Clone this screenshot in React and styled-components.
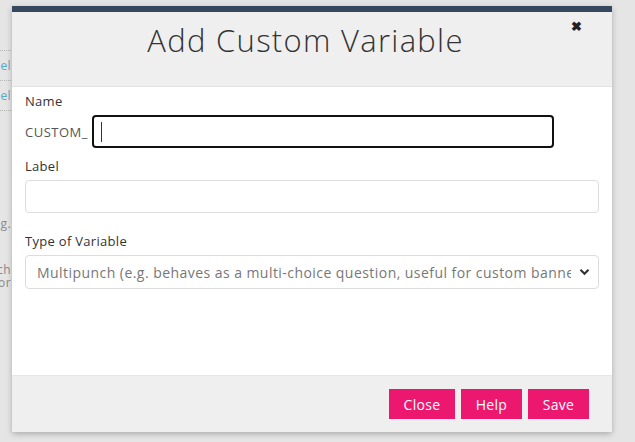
import React from "react";
import styled, { createGlobalStyle } from "styled-components";

const GlobalStyle = createGlobalStyle`
  html, body {
    margin: 0;
    padding: 0;
    background: #e5e5e5;
  }
  body {
    font-family: "Open Sans", "Liberation Sans", sans-serif;
    color: #333;
  }
  * {
    box-sizing: border-box;
  }
`;

const Screen = styled.div`
  position: relative;
  width: 635px;
  height: 442px;
  overflow: hidden;
  background: #e5e5e5;
`;

// page content peeking out behind the dialog
const BackPage = styled.div`
  width: 11px;
  padding-top: 42px;
  display: flex;
  flex-direction: column;
`;

const BackRow = styled.div`
  height: ${({ $h }) => $h}px;
  display: flex;
  justify-content: flex-end;
  align-items: center;
  overflow: hidden;
  white-space: nowrap;
  font-size: 12px;
  line-height: 12px;
  letter-spacing: 0.4px;
  color: ${({ $link }) => ($link ? "#5aa7c7" : "#8a8a8a")};
  border-bottom: ${({ $dotted }) => ($dotted ? "1px dotted #b5b5b5" : "none")};
`;

const Modal = styled.div`
  position: absolute;
  left: 12px;
  top: 6px;
  width: 600px;
  height: 426px;
  display: flex;
  flex-direction: column;
  background: #fff;
  border-top: 6px solid #34495e;
  box-shadow: 0 2px 6px rgba(0, 0, 0, 0.25);
`;

const Header = styled.div`
  height: 75px;
  display: flex;
  align-items: flex-start;
  background: #efefef;
  border-bottom: 1px solid #e2e2e2;
  padding: 0 30px 0 28px;
`;

const Title = styled.h2`
  flex: 1;
  margin: 0;
  padding-top: 7px;
  text-align: center;
  font-size: 31px;
  font-weight: 300;
  letter-spacing: 1.3px;
  color: #333;
`;

const CloseX = styled.span`
  margin-top: 5px;
  font-size: 13px;
  font-weight: 700;
  color: #222;
  cursor: pointer;
`;

const Body = styled.div`
  flex: 1;
  padding: 5px 13px 0 13px;
  letter-spacing: 0.5px;
`;

const Group = styled.div`
  margin-bottom: ${({ $mb }) => $mb}px;
`;

const FieldLabel = styled.label`
  display: block;
  font-size: 13px;
  line-height: 18px;
  font-weight: 500;
  letter-spacing: 0.3px;
  color: #333;
  margin-bottom: ${({ $mb }) => $mb ?? 5}px;
`;

const NameRow = styled.div`
  display: flex;
  align-items: center;
`;

const Prefix = styled.span`
  width: 67px;
  font-size: 13px;
  color: #555;
`;

const TextInput = styled.input`
  display: block;
  width: 100%;
  height: ${({ $h }) => $h}px;
  padding: 0 8px;
  font: inherit;
  font-size: 14px;
  color: #333;
  background: #fff;
  border: 1px solid #ddd;
  border-radius: 4px;
  outline: none;
`;

const Caret = styled.span`
  display: block;
  width: 1px;
  height: 20px;
  background: #333;
`;

const FocusBox = styled.div`
  width: 462px;
  height: 33px;
  display: flex;
  align-items: center;
  padding-left: 7px;
  border: 2px solid #111;
  border-radius: 4px;
`;

const SelectBox = styled.div`
  height: 34px;
  display: flex;
  align-items: center;
  gap: 8px;
  padding: 0 8px 0 11px;
  border: 1px solid #ddd;
  border-radius: 4px;
  background: #fff;
`;

const SelectText = styled.span`
  flex: 1;
  overflow: hidden;
  white-space: nowrap;
  font-size: 14px;
  letter-spacing: 0.45px;
  color: #777;
`;

const Footer = styled.div`
  height: 57px;
  display: flex;
  justify-content: flex-end;
  align-items: flex-start;
  gap: 6px;
  padding: 13px 23px 0 0;
  background: #efefef;
  border-top: 1px solid #e6e6e6;
`;

const Button = styled.button`
  width: ${({ $w }) => $w}px;
  height: 30px;
  padding: 0;
  font: inherit;
  font-size: 14px;
  letter-spacing: 0.3px;
  color: #fff;
  background: #ec1870;
  border: none;
  cursor: pointer;
`;

const Chevron = () => (
  <svg width="11" height="8" viewBox="0 0 11 8">
    <path d="M1.5 1.8 L5.5 5.8 L9.5 1.8" fill="none" stroke="#333" strokeWidth="2.2" />
  </svg>
);

const App = () => {
  return (
    <Screen>
      <GlobalStyle />
      <BackPage>
        <BackRow $h={9} $dotted />
        <BackRow $h={30} $link $dotted>
          Label
        </BackRow>
        <BackRow $h={30} $link $dotted>
          Label
        </BackRow>
        <BackRow $h={104} />
        <BackRow $h={18}>(e.g.</BackRow>
        <BackRow $h={30} />
        <BackRow $h={13}>Multipunch</BackRow>
        <BackRow $h={13}>for</BackRow>
      </BackPage>

      <Modal>
        <Header>
          <Title>Add Custom Variable</Title>
          <CloseX>✖</CloseX>
        </Header>

        <Body>
          <Group $mb={9}>
            <FieldLabel $mb={5}>Name</FieldLabel>
            <NameRow>
              <Prefix>CUSTOM_</Prefix>
              <FocusBox>
                <Caret />
              </FocusBox>
            </NameRow>
          </Group>

          <Group $mb={19}>
            <FieldLabel $mb={5}>Label</FieldLabel>
            <TextInput $h={33} />
          </Group>

          <Group $mb={0}>
            <FieldLabel $mb={5}>Type of Variable</FieldLabel>
            <SelectBox>
              <SelectText>
                Multipunch (e.g. behaves as a multi-choice question, useful for custom banners)
              </SelectText>
              <Chevron />
            </SelectBox>
          </Group>
        </Body>

        <Footer>
          <Button $w={66}>Close</Button>
          <Button $w={61}>Help</Button>
          <Button $w={61}>Save</Button>
        </Footer>
      </Modal>
    </Screen>
  );
};

export default App;
